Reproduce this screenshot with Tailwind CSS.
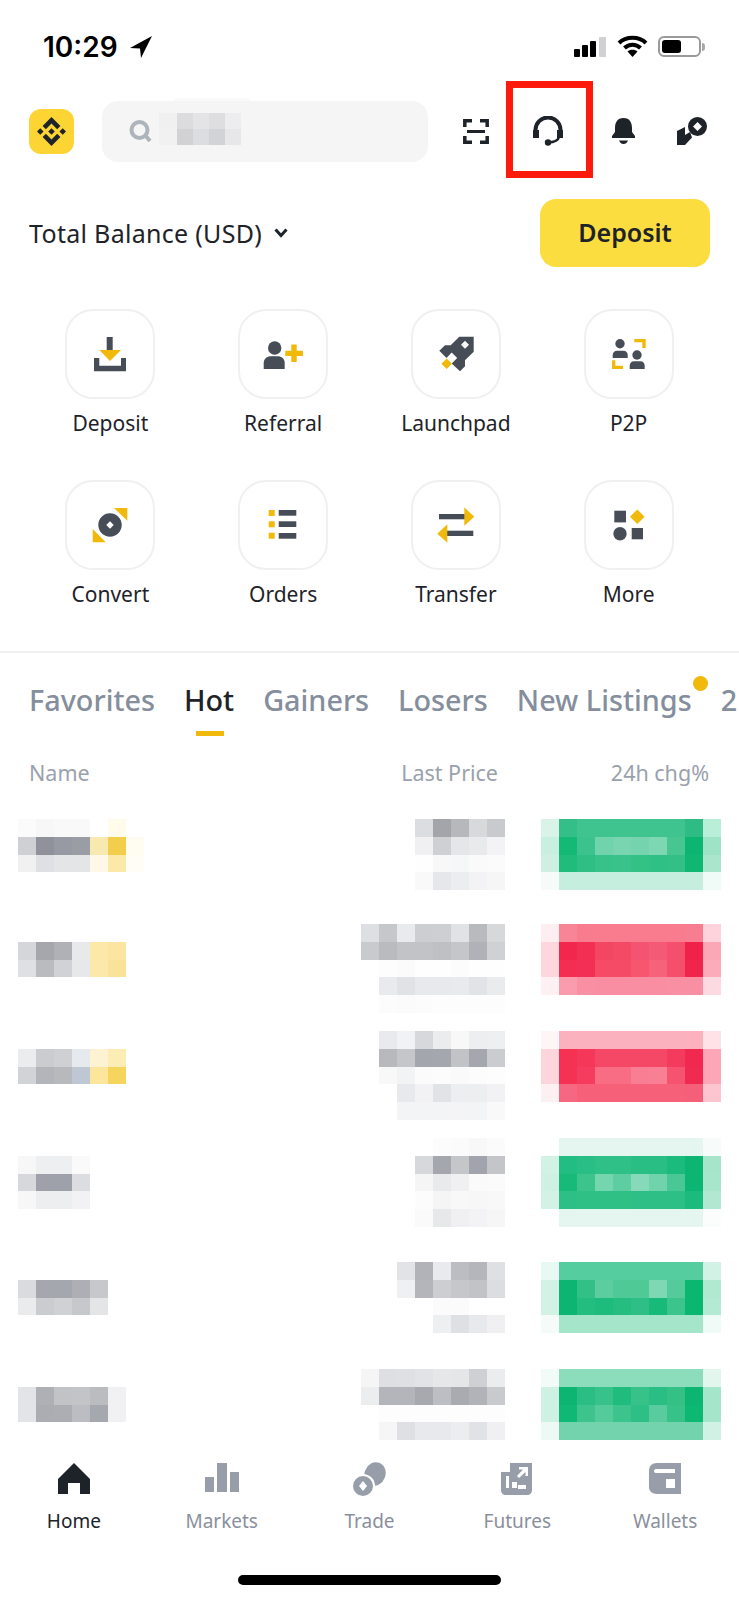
<!DOCTYPE html>
<html lang="en">
<head>
  <meta charset="UTF-8" />
  <title>Binance home</title>
  <script src="https://cdn.jsdelivr.net/npm/@tailwindcss/browser@4"></script>
</head>
<body class="bg-white text-[#1e2329] font-['Noto_Sans',sans-serif] w-[739px] h-[1600px] overflow-hidden">

  <!-- status bar -->
  <div class="h-[81px] flex items-start pl-[43px] pt-[31px]">
    <span class="font-['Inter',sans-serif] font-semibold text-[28px] leading-[32px] text-black w-[87px]">10:29</span>
    <svg class="w-[22px] h-[22px] mt-[5px]" viewBox="0 0 22 22"><path fill="#000" d="M22 0 L0 12 L10 12.500 L11 22Z"/></svg>
    <svg class="ml-auto mt-[6px] w-[32px] h-[20px]" viewBox="0 0 32 20">
      <rect x="0" y="12" width="6" height="8" rx="1" fill="#000"/>
      <rect x="8" y="8" width="6" height="12" rx="1" fill="#000"/>
      <rect x="16" y="4" width="6" height="16" rx="1" fill="#000"/>
      <rect x="25" y="0" width="7" height="20" rx="1" fill="#d1d1d3"/>
    </svg>
    <svg class="ml-[11px] mt-[4px] w-[31px] h-[22px]" viewBox="0 0 31 22" fill="none" stroke="#000" stroke-width="4">
      <path d="M2 8 C9 1 22 1 29 8"/>
      <path d="M7.500 13 C12 8.500 19 8.500 23.500 13"/>
      <path fill="#000" stroke="none" d="M15.500 22 L10.500 16.500 C13 14 18 14 20.500 16.500Z"/>
    </svg>
    <div class="ml-[10px] mr-[34px] mt-[5px] flex items-center">
      <div class="w-[43px] h-[21px] rounded-[6px] border-2 border-[#9a9a9c] p-[2px]">
        <div class="w-[19px] h-full rounded-[3px] bg-black"></div>
      </div>
      <div class="w-[3px] h-[8px] ml-[1px] rounded-r-full bg-[#a8a8aa]"></div>
    </div>
  </div>

  <!-- top bar -->
  <div class="relative h-[100px] flex items-center pl-[29px]">
    <div class="w-[45px] h-[45px] rounded-[12px] bg-[#fcd535] flex items-center justify-center">
      <svg class="w-[29px] h-[29px]" viewBox="0 0 126.610 126.610" fill="#1e2329"><path d="M38.730 53.200l24.590-24.580 24.600 24.600 14.300-14.310L63.320 0 24.420 38.900zM0 63.310l14.300-14.310 14.310 14.310-14.310 14.300zM38.730 73.410l24.590 24.590 24.600-24.600 14.310 14.290-38.900 38.910-38.910-38.880zM98 63.310l14.300-14.310 14.310 14.300-14.310 14.300zM77.830 63.300L63.320 48.780 52.590 59.510l-1.240 1.230-2.540 2.540 14.510 14.500 14.510-14.470z"/></svg>
    </div>
    <div class="relative ml-[28px] w-[326px] h-[61px] rounded-[16px] bg-[#f5f5f5] flex items-center pl-[27px]">
      <svg class="w-[24px] h-[22px]" viewBox="0 0 24 22" fill="none" stroke="#aeb4bc" stroke-width="4"><circle cx="10.500" cy="10" r="8"/><path d="M16 15 L21 21"/></svg>
      <div class="absolute left-[57px] top-[12px] flex flex-col">
        <div class="flex">
          <div class="w-[18px] h-[16px] bg-[#f0f0f0]"></div><div class="w-[16px] h-[16px] bg-[#dcdcde]"></div><div class="w-[16px] h-[16px] bg-[#e4e4e6]"></div><div class="w-[16px] h-[16px] bg-[#dedee0]"></div><div class="w-[16px] h-[16px] bg-[#ededef]"></div>
        </div>
        <div class="flex">
          <div class="w-[18px] h-[16px] bg-[#f1f1f2]"></div><div class="w-[16px] h-[16px] bg-[#d2d2d5]"></div><div class="w-[16px] h-[16px] bg-[#dcdde0]"></div><div class="w-[16px] h-[16px] bg-[#d2d3d6]"></div><div class="w-[16px] h-[16px] bg-[#e7e7e9]"></div>
        </div>
      </div>
      <div class="absolute left-[72px] -top-[3px] w-[76px] h-[3px] bg-[#fafafa]"></div>
    </div>
    <svg class="ml-[35px] w-[26px] h-[25px]" viewBox="0 0 26 25" fill="none" stroke="#1e2329" stroke-width="3.500">
      <path d="M1.800 8 V1.800 H9"/><path d="M17 1.800 H24.200 V8"/><path d="M1.800 17 V23.200 H9"/><path d="M17 23.200 H24.200 V17"/>
      <path d="M4 12.500 H22" stroke-width="3"/>
    </svg>
    <svg class="ml-[44px] w-[30px] h-[30px]" viewBox="0 0 30 30" fill="none">
      <path d="M2.500 17 V14 A12.500 12.500 0 0 1 27.500 14 V17" stroke="#1e2329" stroke-width="4"/>
      <rect x="0" y="14" width="6" height="8" fill="#1e2329"/>
      <rect x="24" y="14" width="6" height="8" fill="#1e2329"/>
      <path d="M26 21 Q25 26 15 26.500" stroke="#1e2329" stroke-width="2.500"/>
      <circle cx="15" cy="26.500" r="3.200" fill="#1e2329"/>
    </svg>
    <svg class="ml-[49px] w-[23px] h-[26px]" viewBox="0 0 23 26" fill="#1e2329">
      <path d="M11.500 0 C5 0 3 5 3 10 V14 L0 18 V20 H23 V18 L20 14 V10 C20 5 18 0 11.500 0Z"/>
      <path d="M7 22.500 H16 C15 25 13.500 26 11.500 26 S8 25 7 22.500Z"/>
    </svg>
    <svg class="ml-[42px] w-[30px] h-[28px]" viewBox="0 0 30 28" fill="#1e2329">
      <path fill-rule="evenodd" d="M20.500 0 A9.500 9.500 0 1 1 20.500 19 A9.500 9.500 0 1 1 20.500 0Z M20.500 5 L16 9.500 L20.500 14 L25 9.500Z"/>
      <path d="M0 14 L8 10 V18 L13 15 L15 20.500 L8 28 H0Z"/>
    </svg>
    <!-- red annotation box round the support icon -->
    <div class="absolute left-[506px] top-0 w-[87px] h-[97px] border-[7px] border-[#fd1a0c]"></div>
  </div>

  <!-- balance -->
  <div class="mt-[18px] h-[68px] flex items-center justify-between px-[29px]">
    <div class="flex items-center">
      <span class="text-[25px] tracking-[0.3px] leading-[32px] text-[#1e2329]">Total Balance (USD)</span>
      <svg class="ml-[12px] w-[14px] h-[10px]" viewBox="0 0 14 10" fill="none" stroke="#1e2329" stroke-width="3"><path d="M1.500 1.500 L7 7.500 L12.500 1.500"/></svg>
    </div>
    <div class="w-[170px] h-[68px] rounded-[16px] bg-[#fcdd3f] flex items-center justify-center text-[25px] font-semibold text-[#1e2329]">Deposit</div>
  </div>

  <!-- shortcuts -->
  <div class="mt-[42px] ml-[24px] w-[691px] grid grid-cols-4 auto-rows-[171px]">
    <div class="flex flex-col items-center">
      <div class="w-[90px] h-[90px] rounded-[28px] border-2 border-[#eef0f2] flex items-center justify-center">
        <svg class="w-[90px] h-[90px] shrink-0" viewBox="0 0 90 90">
          <rect x="41.700" y="28" width="6" height="14" fill="#474d57"/>
          <path fill="#474d57" d="M29 49 H34.300 V56.700 H56 V49 H61 V62.300 H29Z"/>
          <path fill="#f0b90b" d="M34.300 41 H56 L45 52Z"/>
        </svg>
      </div>
      <span class="mt-[10px] text-[21px] leading-[28px]">Deposit</span>
    </div>
    <div class="flex flex-col items-center">
      <div class="w-[90px] h-[90px] rounded-[28px] border-2 border-[#eef0f2] flex items-center justify-center">
        <svg class="w-[90px] h-[90px] shrink-0" viewBox="0 0 90 90">
          <circle cx="36.700" cy="39" r="6.700" fill="#474d57"/>
          <path fill="#474d57" d="M25.700 60 V54 C25.700 50 29 47.300 33 47.300 H39.500 C43.500 47.300 46.700 50 46.700 54 V60Z"/>
          <path fill="#f0b90b" d="M53.300 35.500 H58.700 V41.700 H65 V47 H58.700 V53 H53.300 V47 H47.300 V41.700 H53.300Z"/>
        </svg>
      </div>
      <span class="mt-[10px] text-[21px] leading-[28px]">Referral</span>
    </div>
    <div class="flex flex-col items-center">
      <div class="w-[90px] h-[90px] rounded-[28px] border-2 border-[#eef0f2] flex items-center justify-center">
        <svg class="w-[90px] h-[90px] shrink-0" viewBox="0 0 90 90">
          <path fill="#474d57" d="M62.700 27.700 H48.300 L39.700 36.300 H34 L28.300 41.700 L35.500 49 L40.700 43.500 L46.200 49 L40.700 54.500 L49 62.300 L54 57.300 V51.300 L62.700 42.700Z"/>
          <path fill="#fff" d="M54 31.700 L58 35.700 L54 39.700 L50 35.700Z"/>
          <path fill="#f0b90b" d="M35.700 49.400 L41 54.700 L35.700 60 L30.400 54.700Z"/>
        </svg>
      </div>
      <span class="mt-[10px] text-[21px] leading-[28px]">Launchpad</span>
    </div>
    <div class="flex flex-col items-center">
      <div class="w-[90px] h-[90px] rounded-[28px] border-2 border-[#eef0f2] flex items-center justify-center">
        <svg class="w-[90px] h-[90px] shrink-0" viewBox="0 0 90 90">
          <circle cx="36" cy="34.700" r="4.700" fill="#474d57"/>
          <path fill="#474d57" d="M28.700 49 V46 C28.700 43.500 30.500 41.700 33 41.700 H39.400 C42 41.700 43.700 43.500 43.700 46 V49Z"/>
          <circle cx="53" cy="46" r="4.700" fill="#474d57"/>
          <path fill="#474d57" d="M45.700 60 V57 C45.700 54 47.500 52.300 50 52.300 H56.400 C59 52.300 60.700 54 60.700 57 V60Z"/>
          <path fill="#f0b90b" d="M50.300 30 H61.700 V39 H58.300 V33.300 H50.300Z"/>
          <path fill="#f0b90b" d="M28 51.300 H31.300 V56.700 H39 V60 H28Z"/>
        </svg>
      </div>
      <span class="mt-[10px] text-[21px] leading-[28px]">P2P</span>
    </div>

    <div class="flex flex-col items-center">
      <div class="w-[90px] h-[90px] rounded-[28px] border-2 border-[#eef0f2] flex items-center justify-center">
        <svg class="w-[90px] h-[90px] shrink-0" viewBox="0 0 90 90">
          <circle cx="45" cy="45" r="11.700" fill="#474d57"/>
          <path fill="#fff" d="M45 41.300 L48.700 45 L45 48.700 L41.300 45Z"/>
          <path fill="#f0b90b" d="M49 28 H62.300 V40.700Z"/>
          <path fill="#f0b90b" d="M27.700 49 V62.300 H40.700Z"/>
        </svg>
      </div>
      <span class="mt-[10px] text-[21px] leading-[28px]">Convert</span>
    </div>
    <div class="flex flex-col items-center">
      <div class="w-[90px] h-[90px] rounded-[28px] border-2 border-[#eef0f2] flex items-center justify-center">
        <svg class="w-[90px] h-[90px] shrink-0" viewBox="0 0 90 90">
          <rect x="30.700" y="30" width="6" height="6" fill="#f0b90b"/>
          <rect x="30.700" y="41.300" width="6" height="6" fill="#f0b90b"/>
          <rect x="30.700" y="52.700" width="6" height="6" fill="#f0b90b"/>
          <rect x="40.700" y="30" width="17.600" height="5.700" fill="#474d57"/>
          <rect x="40.700" y="41.300" width="17.600" height="5.700" fill="#474d57"/>
          <rect x="40.700" y="53" width="17.600" height="5.700" fill="#474d57"/>
        </svg>
      </div>
      <span class="mt-[10px] text-[21px] leading-[28px]">Orders</span>
    </div>
    <div class="flex flex-col items-center">
      <div class="w-[90px] h-[90px] rounded-[28px] border-2 border-[#eef0f2] flex items-center justify-center">
        <svg class="w-[90px] h-[90px] shrink-0" viewBox="0 0 90 90">
          <rect x="28" y="34" width="26" height="5.300" fill="#474d57"/>
          <path fill="#f0b90b" d="M53.300 27.300 L63.300 36.700 L53.300 45.700Z"/>
          <rect x="35.700" y="50.700" width="26.600" height="5.300" fill="#474d57"/>
          <path fill="#f0b90b" d="M36.300 44.300 L26.300 53.700 L36.300 62.700Z"/>
        </svg>
      </div>
      <span class="mt-[10px] text-[21px] leading-[28px]">Transfer</span>
    </div>
    <div class="flex flex-col items-center">
      <div class="w-[90px] h-[90px] rounded-[28px] border-2 border-[#eef0f2] flex items-center justify-center">
        <svg class="w-[90px] h-[90px] shrink-0" viewBox="0 0 90 90">
          <rect x="30.300" y="30.700" width="11.700" height="11.700" fill="#474d57"/>
          <path fill="#f0b90b" d="M53.300 29.400 L60.600 36.700 L53.300 44 L46 36.700Z"/>
          <circle cx="36" cy="53.700" r="6.700" fill="#474d57"/>
          <rect x="47.700" y="48" width="11.300" height="11.300" fill="#474d57"/>
        </svg>
      </div>
      <span class="mt-[10px] text-[21px] leading-[28px]">More</span>
    </div>
  </div>

  <div class="h-[2px] bg-[#eeeff1]"></div>

  <!-- market tabs -->
  <div class="h-[92px] flex gap-[29px] pl-[29px] pt-[28px] overflow-hidden whitespace-nowrap text-[28.800px] leading-[38px] font-medium text-[#848e9c]">
    <span>Favorites</span>
    <span class="relative text-[#1e2329]">Hot<span class="absolute left-[12px] top-[50px] w-[28px] h-[5px] bg-[#f0b90b]"></span></span>
    <span>Gainers</span>
    <span>Losers</span>
    <span class="relative">New Listings<span class="absolute -right-[16px] -top-[5px] w-[15px] h-[15px] rounded-full bg-[#f0b90b]"></span></span>
    <span>2</span>
  </div>

  <div class="h-[56px] flex items-center pl-[29px] pr-[30px] text-[21.500px] text-[#9aa1ac]">
    <span class="flex-1">Name</span>
    <span class="w-[110px] text-right">Last Price</span>
    <span class="w-[211px] text-right">24h chg%</span>
  </div>

  <!-- coin rows, pixelated in the source -->
  <div id="rows" class="pt-[18px] h-[644px] overflow-hidden"></div>

  <!-- bottom nav -->
  <div class="h-[155px] bg-white grid grid-cols-5 pt-[17px] relative text-[19px] leading-[24px] text-[#8a909c]">
    <div class="flex flex-col items-center">
      <svg class="w-[34px] h-[34px]" viewBox="0 0 34 34"><path fill="#1e2329" d="M17 1 L33 17 V32 H23 V21 H11 V32 H1 V17Z"/></svg>
      <span class="mt-[13px] text-[#1e2329]">Home</span>
    </div>
    <div class="flex flex-col items-center">
      <svg class="w-[34px] h-[34px]" viewBox="0 0 34 34" fill="#979ea9"><rect x="0" y="15" width="9" height="15"/><rect x="12" y="1" width="10" height="29"/><rect x="25" y="10" width="9" height="20"/></svg>
      <span class="mt-[13px]">Markets</span>
    </div>
    <div class="flex flex-col items-center">
      <svg class="w-[34px] h-[34px]" viewBox="0 0 34 34">
        <ellipse cx="23" cy="12" rx="10.500" ry="12" fill="#979ea9" transform="rotate(20 23 12)"/>
        <circle cx="11" cy="24" r="12" fill="#fff"/>
        <circle cx="11" cy="24" r="10" fill="#979ea9"/>
        <path fill="#fff" d="M11 19 L15 24 L11 29 L7 24Z"/>
      </svg>
      <span class="mt-[13px]">Trade</span>
    </div>
    <div class="flex flex-col items-center">
      <svg class="w-[34px] h-[34px]" viewBox="0 0 34 34">
        <path fill="#979ea9" d="M10 1 H32 V28 C32 31 30 33 27 33 H6 C3 33 1 31 1 28 V10 H10Z"/>
        <path fill="#fff" d="M19 5 H28 V14 H25.500 V10 L19 16 L17 14 L23 7.500 H19Z"/>
        <path fill="#fff" d="M6 14 H9 V26 H6Z M12 20 L17 20 V26 H12Z M18 23 H26 V27 H18Z"/>
      </svg>
      <span class="mt-[13px]">Futures</span>
    </div>
    <div class="flex flex-col items-center">
      <svg class="w-[34px] h-[34px]" viewBox="0 0 34 34">
        <path fill="#979ea9" d="M9 1 H33 V32 H9 C4 32 1 29 1 25 V9 C1 4 4 1 9 1Z"/>
        <path fill="#fff" d="M8 7 H27 V11 H8 C6.500 11 6 10 6 9 S6.500 7 8 7Z"/>
        <rect x="18" y="17" width="9" height="9" fill="#fff"/>
      </svg>
      <span class="mt-[13px]">Wallets</span>
    </div>
    <div class="absolute left-[238px] top-[130px] w-[263px] h-[10px] rounded-full bg-black"></div>
  </div>

  <script>
    // "." = empty cell. Each coin row: height in px, then name / price / change mosaics
    const rows = [
      { h: 105,
        name: [
          "fbfbfb f7f7f8 f9f9fa f9f9fa . fffcec .",
          "cfd0d3 8f929b 979aa2 9a9da4 f8e9b0 f3cd4c fffcf2",
          "f1f1f2 dfe0e3 e4e5e7 e4e5e7 fdf8e8 fae9a8 fffdf5"],
        price: [
          "dcdde0 a3a5ab b6b8bc d8d9db c9cace",
          "f0f0f2 cfd0d3 e5e6e8 e9eaeb f3f3f5",
          "fefefe f8f8f9 f6f7f8 fafafa fbfbfb",
          "f9f9f9 e6e7ea ecedef f3f3f5 f6f6f7"],
        chg: [
          "d9f3e8 34bf88 3fc490 3fc490 3fc490 3fc490 3fc490 3fc490 2fbc84 b9eed8",
          "c8efdf 15b976 3cc28c 70d3ac 79d5b0 75d4ae 7cd7b2 48c691 0cb672 9ee3c5",
          "ceefe2 20bc7c 2fbf84 36c288 39c28a 33c186 2fc086 32c086 10b773 a9e6cc",
          "f6fbf9 c5eede c5eede c5eede c5eede c5eede c5eede c5eede c5eede f0faf6"] },
      { h: 107,
        name: [
          ". . . . . .",
          "d5d6d9 a5a7ad afb1b6 e7e9eb fce8a8 fbe5a0",
          "dfe0e3 b9bbbf d0d2d5 e6e8ea fce8ab fae29a"],
        price: [
          "dedfe2 c6c7cb e9eaec cdced1 cecfd2 e1e2e5 b9babe d7d8da",
          "c9cace b9bbbf c2c3c7 c2c3c7 bec0c4 c5c6ca b0b2b7 d0d1d4",
          ". fdfdfd fbfbfb fefefe fefefe fcfcfc fefefe fefefe",
          ". e9eaed e1e2e6 e8e9ec e8e9ec e9eaed e2e3e6 eaebed",
          ". fcfcfc fbfbfb fcfcfc fdfdfd fdfdfd fdfdfd fdfdfd"],
        chg: [
          "feeef1 f88596 f97b8e f97b8e f97b8e f97b8e f97b8e f97b8e f77d90 ffd3dc",
          "fdd6de f3274d f32f54 f34662 f44a66 f45471 f45a75 f44f6c f0224a fca7b5",
          "fdd6de f42d52 f32f55 f64b67 f64b67 f6576f f56279 f54f6c f1244c fcabba",
          "fef0f3 fa9cae f98fa2 f98ea2 f98ea2 f98ea2 f98ea2 f98fa2 f98fa2 fddae1"] },
      { h: 107,
        name: [
          ". . . . . .",
          "ebecee cbccd0 cfd0d3 e6e9ed fdf3d2 fbedb4",
          "d2d3d6 b3b5ba b7b9bd c0c7d4 fbe69b f6d55e"],
        price: [
          "e9eaed f1f2f3 d7d8db ebecee f8f8f9 edeef0 eeeff1",
          "b7b9bd c5c6ca a3a6ad a4a7ae c2c3c7 a4a7ae cbccd0",
          "f8f8f9 f2f3f4 fbfbfc fcfcfc fafafb fcfcfc fdfdfd",
          ". e8e9ec f2f2f4 e2e3e7 edeef0 edeef0 f2f2f4",
          ". f3f4f6 f3f4f6 f3f4f6 f4f4f6 f3f4f6 f9f9fa"],
        chg: [
          "fdf5f6 fcb1bf fcb1bf fcb1bf fcb1bf fcb1bf fcb1bf fcb1bf fcb1bf fde3e8",
          "fdd5dd f53253 f5375a f54866 f54866 f54866 f54866 f33b5e f12850 fca6b7",
          "fdd5dd f53253 f53c5e f86c84 f86c84 f97e93 f98094 f5536f f02a50 fca6b7",
          "fdf0f3 f66781 f66079 f66079 f66079 f66079 f66079 f66079 f45f79 fcc5d0"] },
      { h: 124,
        name: [
          ". . . .",
          "f7f7f8 eeeff1 eeeff1 fafafb",
          "d7d8db 9ea1a9 9ea1a9 dcdde0",
          "f7f7f8 eceef0 eceef0 f2f2f4"],
        price: [
          ". fcfcfc fbfbfb f8f8f9 fbfbfb",
          "d7d8db a4a7ae c5c6ca a1a4ac c3c5c9",
          "f5f5f6 e9eaec f0f0f2 fafafa fbfbfb",
          "fcfcfc f5f5f6 f8f8f9 f7f7f8 f8f8f9",
          "fafafb e7e8ea f0f0f2 f3f3f5 f6f6f7"],
        chg: [
          ". e5f6f0 e5f6f0 e5f6f0 e5f6f0 e5f6f0 e5f6f0 e5f6f0 e5f6f0 f7fcfa",
          "d2f2e5 22bd82 29be85 2ec087 2ec087 29be84 28be84 1bbb7d 0cb672 a7e5cb",
          "cff1e3 17ba78 3cc48c 74d5ae 5ecea2 87dab9 70d3ab 49c794 0cb672 a8e6cc",
          "d2f2e5 2dbf85 2fc086 2fc086 2fc086 2dbf85 2dbf85 2dbf85 1bbb7d b2e8d2",
          ". e5f6f0 e5f6f0 e5f6f0 e5f6f0 e5f6f0 e5f6f0 e5f6f0 e5f6f0 fafdfc"] },
      { h: 107,
        name: [
          ". . . . .",
          "dadbde a5a7ae a5a7ae adafb5 c7c8cc",
          "eaebed cbccd0 d0d1d4 c7c8cc e4e5e7"],
        price: [
          "e2e3e6 b1b3b8 e9eaed bcbdc2 b4b6bb dfe0e3",
          "eff0f1 b3b5ba cdced1 c6c7cb c2c3c7 dcdde0",
          ". . fbfbfb fbfbfb . .",
          ". . eeeff1 dee0e3 e8e9ec f0f0f2"],
        chg: [
          "e8f8f2 56cd9f 56cd9f 56cd9f 56cd9f 56cd9f 56cd9f 56cd9f 56cd9f d1f2e4",
          "d2f2e5 0cb672 33c086 5bcd9f 4fca97 4fca97 7dd8b3 55cb9b 0ab770 b0e8d0",
          "d2f2e5 0cb672 24bd80 1dbb7c 25bd80 2dbf85 18ba79 3cc48d 0ab770 b4e9d3",
          "f5fbf9 a5e5ca a5e5ca a5e5ca a5e5ca a5e5ca a5e5ca a5e5ca a5e5ca f0faf6"] },
      { h: 92,
        name: [
          ". . . . . .",
          "e3e4e7 aeb0b5 c2c3c7 c3c4c8 babcc0 f1f1f3",
          "e3e4e7 abadb3 acaeb4 bcbdc2 a5a8ae f1f1f3"],
        price: [
          "f5f5f6 dedfe3 dfe0e3 e2e3e6 e6e7e9 e5e6e8 cfd0d3 ebecee",
          "ecedee b3b5ba b3b5ba a7a9af bdbec3 a9abb1 b1b3b8 c9cace",
          ". fdfdfd fdfdfd fdfdfd fdfdfd fdfdfd fdfdfd fdfdfd",
          ". f6f6f7 dfe0e3 e8e9ec e8e9ec ecedef e1e2e5 f0f0f2"],
        chg: [
          "f1fbf7 8cddbb 8cddbb 8cddbb 8cddbb 8cddbb 8cddbb 8cddbb 8cddbb e3f6ee",
          "cff1e3 0cb672 2abe84 36c288 1fbc7e 36c288 2abe84 33c186 0cb672 a5e5ca",
          "cff1e3 0fb874 3cc48c 53cb9a 3cc48c 2dbf85 58cc9e 36c288 0db873 a5e5ca",
          "ecf9f4 72d3ac 72d3ac 72d3ac 72d3ac 72d3ac 72d3ac 72d3ac 72d3ac d0f1e3"] }
    ];

    function mosaic(lines) {
      const block = document.createElement("div");
      block.className = "flex flex-col items-end";
      lines.forEach((line) => {
        const row = document.createElement("div");
        row.className = "flex";
        line.split(" ").forEach((c) => {
          const cell = document.createElement("div");
          cell.className = "w-[18px] h-[17.800px]";
          if (c !== ".") cell.style.background = "#" + c;
          row.appendChild(cell);
        });
        block.appendChild(row);
      });
      return block;
    }

    const list = document.getElementById("rows");
    rows.forEach((r) => {
      const row = document.createElement("div");
      row.className = "flex items-start pl-[18px] pr-[18px]";
      row.style.height = r.h + "px";
      const name = mosaic(r.name);
      const price = mosaic(r.price);
      price.className += " ml-auto mr-[36px]";
      row.append(name, price, mosaic(r.chg));
      list.appendChild(row);
    });
  </script>
</body>
</html>
